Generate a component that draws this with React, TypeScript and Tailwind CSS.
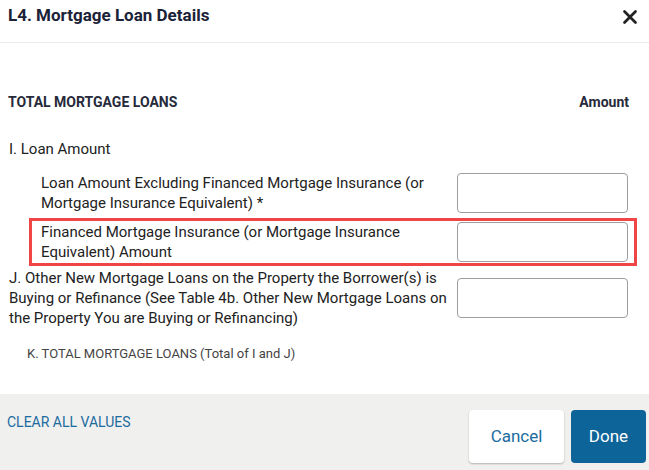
import { X } from "lucide-react"

const font = { fontFamily: '"Roboto", "Liberation Sans", sans-serif' }

function AmountInput() {
  return <input className="h-10 w-[171px] shrink-0 rounded-[4px] border border-[#9e9e9e] bg-white" />
}

export default function App() {
  return (
    <div className="flex h-[470px] w-[649px] flex-col bg-white text-[#222]" style={font}>
      <div className="flex h-[43px] items-start justify-between border-b border-[#ebebeb] pl-2 pr-2 pt-[3px]">
        <h1 className="text-[17px] font-bold text-[#1b2238]">L4. Mortgage Loan Details</h1>
        <X className="mt-[3px] h-[22px] w-[22px] text-[#222]" strokeWidth={3} />
      </div>

      <div className="flex flex-1 flex-col px-2">
        <div className="mt-[49px] flex items-center justify-between pr-[12px] text-[14px] font-bold text-[#262a3a]">
          <span>TOTAL MORTGAGE LOANS</span>
          <span>Amount</span>
        </div>

        <div className="mt-[25px] pl-px text-[15px]">I. Loan Amount</div>

        <div className="mt-[12px] flex items-center justify-between pl-[33px] pr-[13px]">
          <p className="w-[390px] text-[15px] leading-5">
            Loan Amount Excluding Financed Mortgage Insurance (or Mortgage Insurance Equivalent) *
          </p>
          <AmountInput />
        </div>

        <div className="ml-[21px] mr-[4px] mt-[5px] flex items-center justify-between border-[3px] border-[#f04545] pb-px pl-[9px] pr-[6px] pt-px">
          <p className="w-[370px] text-[15px] leading-5">
            Financed Mortgage Insurance (or Mortgage Insurance Equivalent) Amount
          </p>
          <AmountInput />
        </div>

        <div className="mt-[2px] flex items-center justify-between pl-px pr-[13px]">
          <p className="w-[446px] text-[15px] leading-5">
            J. Other New Mortgage Loans on the Property the Borrower(s) is Buying or Refinance (See Table 4b. Other New
            Mortgage Loans on the Property You are Buying or Refinancing)
          </p>
          <AmountInput />
        </div>

        <div className="mt-[16px] pl-[19px] text-[13px] text-[#444]">K. TOTAL MORTGAGE LOANS (Total of I and J)</div>
      </div>

      <div className="flex h-[76px] items-start justify-between bg-[#f0f0ef] pl-[7px] pr-[3px] pt-[16px]">
        <button className="mt-[2px] text-[14px] text-[#1b6b9e]">CLEAR ALL VALUES</button>
        <div className="flex gap-[7px]">
          <button className="h-[53px] w-[95px] rounded-[4px] bg-white text-[17px] text-[#1b6b9e] shadow-[0_1px_2px_rgba(0,0,0,0.25)]">
            Cancel
          </button>
          <button className="h-[53px] w-[75px] rounded-[4px] bg-[#0c6499] text-[17px] text-white">Done</button>
        </div>
      </div>
    </div>
  )
}
